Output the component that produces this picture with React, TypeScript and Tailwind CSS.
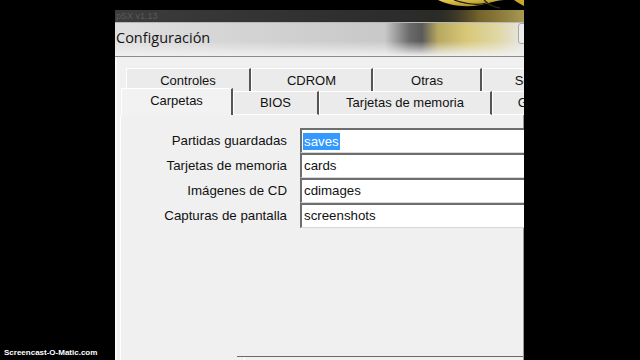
const topTabs = [
  { label: 'Controles', w: 'w-[125px]' },
  { label: 'CDROM', w: 'w-[122px]' },
  { label: 'Otras', w: 'w-[109px]' },
  { label: 'Sonido', w: 'w-[107px]' },
]

const frontTabs = [
  { label: 'BIOS', w: 'w-[86px]' },
  { label: 'Tarjetas de memoria', w: 'w-[173px]' },
  { label: 'Gráficos', w: 'w-[101px]' },
]

const folders = [
  { label: 'Partidas guardadas', value: 'saves', selected: true },
  { label: 'Tarjetas de memoria', value: 'cards' },
  { label: 'Imágenes de CD', value: 'cdimages' },
  { label: 'Capturas de pantalla', value: 'screenshots' },
]

function TitleArt() {
  return (
    <svg className="absolute right-0 top-0" width="110" height="22" viewBox="0 0 110 22">
      <defs>
        <linearGradient id="gold" x1="0" y1="0" x2="1" y2="1">
          <stop offset="0" stopColor="#e8d050" />
          <stop offset="1" stopColor="#9a7c1a" />
        </linearGradient>
        <linearGradient id="blur" x1="0" y1="0" x2="1" y2="0">
          <stop offset="0" stopColor="#3a3a2a" stopOpacity="0" />
          <stop offset="0.5" stopColor="#a88c30" stopOpacity="0.6" />
          <stop offset="1" stopColor="#c9b660" stopOpacity="0.8" />
        </linearGradient>
      </defs>
      <path d="M24 0 C34 5 50 8 66 5 C76 3 84 0 90 0 Z" fill="url(#gold)" />
      <path d="M40 0 C52 4 62 6 72 3" stroke="#1a1a1a" strokeWidth="1.2" fill="none" />
      <path d="M70 0 C74 4 78 7 86 8" stroke="#2a2a1a" strokeWidth="1.4" fill="none" />
      <path d="M100 0 L110 0 L110 6 C106 4 103 2 100 0 Z" fill="#c9a82a" />
      <rect x="20" y="10" width="90" height="12" fill="url(#blur)" />
    </svg>
  )
}

export default function App() {
  return (
    <div className="flex h-[360px] w-[640px] overflow-hidden bg-black font-['Liberation_Sans',Arial,sans-serif] text-[13px] text-[#111]">
      {/* left bar + watermark */}
      <div className="flex w-[115px] shrink-0 flex-col justify-end pb-[2px] pl-[4px]">
        <span className="whitespace-nowrap text-[8px] font-bold leading-[10px] text-white">
          Screencast-O-Matic.com
        </span>
      </div>

      {/* dialog */}
      <div className="flex w-[409px] shrink-0 flex-col overflow-hidden">
        <div className="relative h-[22px] shrink-0">
          <div className="h-[10px] bg-black" />
          <div className="flex h-[12px] items-center bg-[linear-gradient(90deg,#3c3c3c_0%,#2e2e2e_60%,#262620_100%)] pl-[1px] text-[9px] leading-none text-[#5a5a5a]">
            pSX v1.13
          </div>
          <TitleArt />
        </div>

        <div className="flex h-[35px] shrink-0 items-center justify-between border-t border-b border-t-[#b8b8b8] border-b-[#8c8c8c] bg-[linear-gradient(180deg,rgba(242,242,242,0)_55%,#f0f0f0_100%),linear-gradient(90deg,#e0e0e0_0%,#d4d4d4_30%,#c8c8c8_66%,#6a6a6a_72%,#5a5a5a_75%,#b8a860_79%,#d8c878_86%,#e0d8a8_94%,#e6e6e6_100%)]">
          <span className="pb-[4px] pl-[1px] font-['Open_Sans','Noto_Sans',sans-serif] text-[14.5px] text-[#151515]">
            Configuración
          </span>
          <div className="mr-[-16px] h-[21px] w-[22px] self-start rounded-[3px] border border-[#a8a8a8] bg-[#ececec]" />
        </div>

        <div className="flex flex-1 flex-col border-l-2 border-[#fafafa] bg-[#f0f0f0] pt-[11px]">
          {/* back tab row */}
          <div className="ml-[9px] flex h-[23px]">
            {topTabs.map((t) => (
              <div
                key={t.label}
                className={`${t.w} flex shrink-0 items-center justify-center whitespace-nowrap border-t border-l border-[#ffffff] border-r-2 border-r-[#555] bg-[#ebebeb] pt-[2px]`}
              >
                {t.label}
              </div>
            ))}
          </div>

          {/* front tab row */}
          <div className="ml-[4px] flex h-[24px] items-end">
            <div className="mt-[-3px] flex h-[27px] w-[112px] shrink-0 items-center justify-center border-t border-l border-[#ffffff] border-r-2 border-r-[#555] bg-[#f2f2f2] pb-[2px]">
              Carpetas
            </div>
            {frontTabs.map((t) => (
              <div
                key={t.label}
                className={`${t.w} flex h-[24px] shrink-0 items-center justify-center whitespace-nowrap border-t border-l border-b border-[#ffffff] border-r-2 border-r-[#555] bg-[#ebebeb]`}
              >
                {t.label}
              </div>
            ))}
          </div>

          {/* page */}
          <div className="ml-[3px] flex flex-1 flex-col border-l border-r border-l-[#ffffff] border-r-[#9a9a9a] pt-[13px]">
            <div className="flex flex-col">
              {folders.map((f) => (
                <div key={f.label} className="flex h-[25px] items-center">
                  <div className="w-[179px] shrink-0 pr-[13px] text-right text-[13.3px]">{f.label}</div>
                  <div className="flex h-[25px] w-[240px] shrink-0 items-center border-t-2 border-l-2 border-[#6e6e6e] border-b border-b-[#d8d8d8] bg-white pl-[1px] text-[13.3px]">
                    {f.selected ? (
                      <span className="bg-[#3399ff] px-[1px] leading-[17px] text-white">{f.value}</span>
                    ) : (
                      <span className="px-[1px]">{f.value}</span>
                    )}
                  </div>
                </div>
              ))}
            </div>
            <div className="flex-1" />
            <div className="ml-[116px] flex h-[4px] border-t border-[#6a6a6a]">
              <div className="ml-[7px] h-[4px] w-[1px] bg-white" />
            </div>
          </div>
        </div>
      </div>

      {/* right bar */}
      <div className="w-[116px] shrink-0 bg-black" />
    </div>
  )
}
